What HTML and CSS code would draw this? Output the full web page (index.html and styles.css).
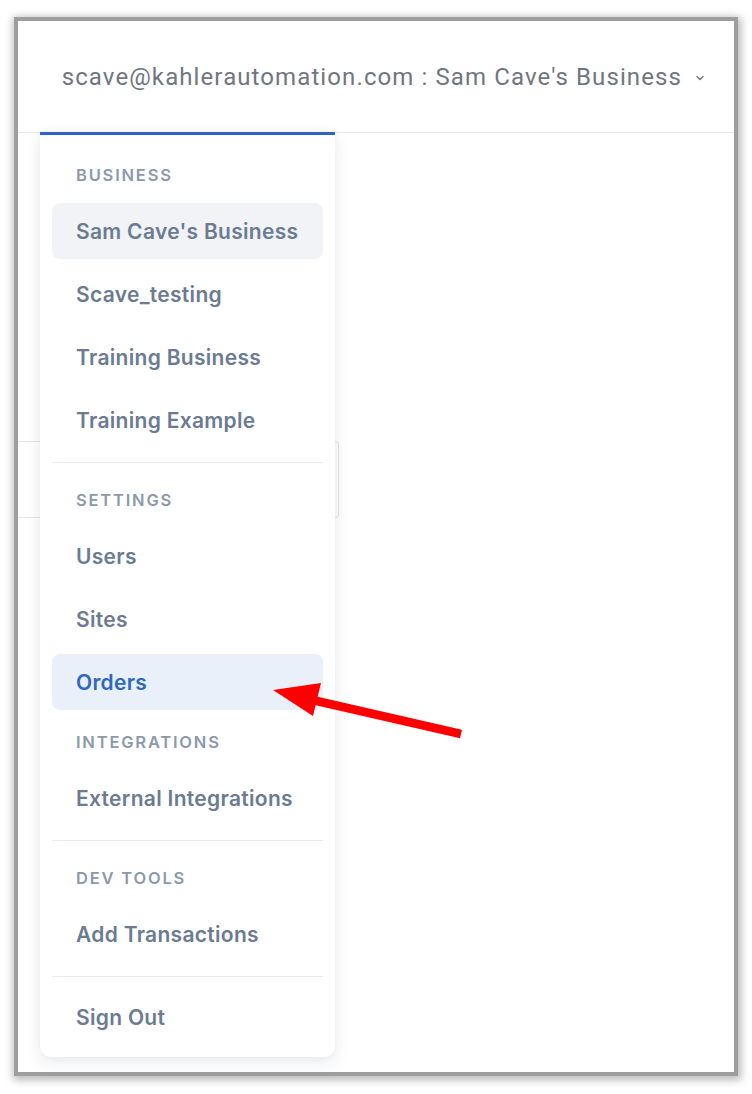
FILE: index.html
```html
<!DOCTYPE html>
<html>
<head>
<meta charset="utf-8">
<link rel="stylesheet" href="styles.css">
</head>
<body>
<div class="frame">
  <header class="topbar">
    <div class="account">
      <span class="account-text">scave@kahlerautomation.com : Sam Cave's Business</span>
      <svg class="chev" width="12" height="12" viewBox="0 0 12 12"><path d="M3 4.5 L6 7.5 L9 4.5" fill="none" stroke="#6b7280" stroke-width="1.4" stroke-linecap="round" stroke-linejoin="round"/></svg>
    </div>
  </header>
  <main class="content">
    <div class="bg-card"></div>
  </main>

  <nav class="menu">
    <div class="label first">BUSINESS</div>
    <div class="item selected">Sam Cave's Business</div>
    <div class="item">Scave_testing</div>
    <div class="item">Training Business</div>
    <div class="item">Training Example</div>
    <div class="divider"></div>
    <div class="label">SETTINGS</div>
    <div class="item">Users</div>
    <div class="item">Sites</div>
    <div class="item active">Orders</div>
    <div class="label">INTEGRATIONS</div>
    <div class="item">External Integrations</div>
    <div class="divider"></div>
    <div class="label">DEV TOOLS</div>
    <div class="item">Add Transactions</div>
    <div class="divider"></div>
    <div class="item">Sign Out</div>
  </nav>

  <svg class="arrow" width="752" height="1094" viewBox="0 0 752 1094">
    <line x1="308" y1="699" x2="461" y2="734" stroke="#ff0000" stroke-width="8.5" stroke-linecap="butt"/>
    <polygon points="273,690 321,683 313,716" fill="#ff0000"/>
  </svg>
</div>
</body>
</html>
```

FILE: styles.css
```css
html, body {
  margin: 0;
  padding: 0;
  background: #ffffff;
}
body {
  width: 752px;
  height: 1094px;
  overflow: hidden;
  font-family: Inter, "Noto Sans", "Liberation Sans", sans-serif;
}
.frame {
  position: relative;
  margin: 21px 0 0 18px;
  width: 716px;
  height: 1051px;
  background: #ffffff;
  box-shadow: 0 0 0 4px #9e9e9e, 1px 2px 8px 6px rgba(0, 0, 0, 0.28);
}
.topbar {
  height: 111px;
  border-bottom: 1px solid #e6e8ec;
  display: flex;
  align-items: center;
  justify-content: flex-end;
  padding-right: 28px;
}
.account {
  display: flex;
  align-items: center;
  gap: 12px;
  padding-top: 1px;
}
.account-text {
  font-family: Roboto, "Liberation Sans", sans-serif;
  font-size: 24px;
  color: #6f7682;
  letter-spacing: 1.1px;
}
.chev {
  margin-top: 2px;
}
.content {
  padding-top: 308px;
}
.bg-card {
  width: 320px;
  height: 75px;
  border: 1px solid #e4e7eb;
  border-left: none;
  border-radius: 0 4px 4px 0;
}
.menu {
  position: absolute;
  left: 22px;
  top: 111px;
  width: 271px;
  padding: 15px 12px 5px 12px;
  border-top: 3px solid #2f64c6;
  background: #ffffff;
  border-radius: 0 0 11px 11px;
  box-shadow: 0 6px 18px rgba(30, 41, 59, 0.08), 0 0 10px rgba(30, 41, 59, 0.05);
  display: flex;
  flex-direction: column;
}
.label {
  height: 28px;
  margin-top: 11px;
  margin-bottom: 14px;
  padding-left: 24px;
  display: flex;
  align-items: center;
  font-size: 16.5px;
  font-weight: 600;
  letter-spacing: 1.8px;
  color: #8c99ab;
}
.item {
  height: 56px;
  margin-bottom: 7px;
  padding-left: 24px;
  display: flex;
  align-items: center;
  border-radius: 8px;
  font-size: 21px;
  font-weight: 600;
  letter-spacing: 0.3px;
  color: #6b7b92;
}
.item.selected {
  background: #f1f3f6;
}
.item.active {
  background: #e9f0fa;
  color: #2f67c4;
}
.divider {
  height: 1px;
  background: #e8ebf0;
  margin: 7px 0 12px 0;
}
.arrow {
  position: absolute;
  left: -18px;
  top: -21px;
  pointer-events: none;
}
```
